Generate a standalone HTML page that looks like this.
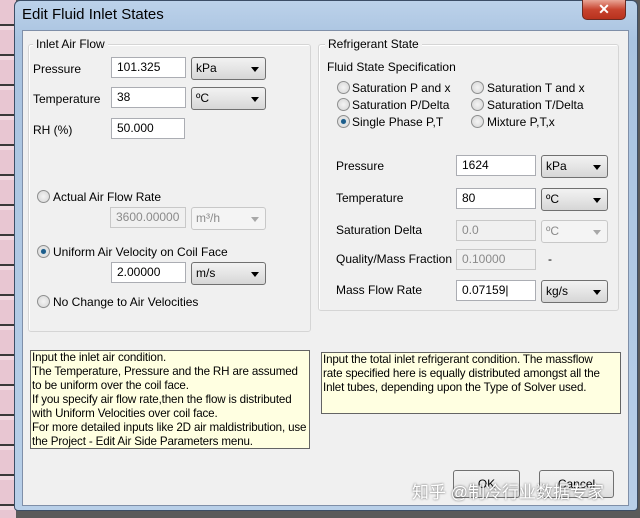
<!DOCTYPE html>
<html><head><meta charset="utf-8"><style>
*{box-sizing:border-box;margin:0;padding:0}
body{width:640px;height:518px;overflow:hidden;position:relative;background:#5a5a5a;font-family:"Liberation Sans",Tahoma,sans-serif;font-size:12px;color:#000}
.a{position:absolute}
.strip{left:0;top:0;width:16px;height:518px;background:repeating-linear-gradient(#e8c6d2 0 24px,#3a3a3a 24px 26px,#f0d8e0 26px 30px);}
.win{left:14px;top:0;width:624px;height:511px;background:linear-gradient(#bcd2ea,#a9c3e0 40px,#b8cfe8);border:1px solid #3c4e66;border-radius:6px 6px 4px 4px}
.client{left:22px;top:30px;width:607px;height:476px;background:#f0f0f0;border:1px solid #7f8fa8}
.title{left:22px;top:6px;font-size:15px;color:#000}
.close{left:582px;top:0;width:44px;height:20px;background:linear-gradient(#e9a596,#c8442f 50%,#b8321e);border:1px solid #6b2a22;border-top:none;border-radius:0 0 5px 5px;color:#fff;font-weight:bold;text-align:center;font-size:14px;line-height:18px}
.grp{border:1px solid #d5d5d5;border-radius:3px;box-shadow:1px 1px 0 #fff inset}
.gl{background:#f0f0f0;padding:0 3px}
.tb{height:21px;background:#fff;border:1px solid #abadb3;padding:2px 5px;line-height:15px}
.tb.dis{background:#f0f0f0;color:#8a8a8a;border-color:#c8c8c8}
.cb{height:23px;border:1px solid #707070;border-radius:3px;background:linear-gradient(#f2f2f2,#e5e5e5 50%,#d6d6d6);padding:3px 4px;line-height:15px}
.cb:after{content:"";position:absolute;right:6px;top:9px;border-left:4px solid transparent;border-right:4px solid transparent;border-top:5px solid #000}
.cb.dis{border-color:#c8c8c8;background:#f4f4f4;color:#8a8a8a}
.cb.dis:after{border-top-color:#a8a8a8}
.r{width:13px;height:13px;border-radius:50%;border:1px solid #8e8f8f;background:radial-gradient(#f4f4f4,#d4d4d4)}
.r.on:after{content:"";position:absolute;left:3px;top:3px;width:5px;height:5px;border-radius:50%;background:#1c5d8c;box-shadow:0 0 1px #7ab}
.yb{background:#ffffe1;border:1px solid #646464;padding:0 1px;line-height:14px;font-size:11.6px;letter-spacing:-0.15px}
.btn{border:1px solid #707070;border-radius:3px;background:linear-gradient(#f2f2f2,#ebebeb 50%,#dddddd);text-align:center;line-height:26px}
</style></head><body>
<div class="a strip"></div>
<div class="a win"></div>
<div class="a title">Edit Fluid Inlet States</div>
<div class="a close">✕</div>
<div class="a client"></div>

<div class="a grp" style="left:28px;top:44px;width:283px;height:288px"></div>
<div class="a gl" style="left:33px;top:37px">Inlet Air Flow</div>
<div class="a" style="left:33px;top:62px">Pressure</div>
<div class="a tb" style="left:111px;top:57px;width:75px">101.325</div>
<div class="a cb" style="left:191px;top:57px;width:75px">kPa</div>
<div class="a" style="left:33px;top:92px">Temperature</div>
<div class="a tb" style="left:111px;top:87px;width:75px">38</div>
<div class="a cb" style="left:191px;top:87px;width:75px">ºC</div>
<div class="a" style="left:33px;top:123px">RH (%)</div>
<div class="a tb" style="left:111px;top:118px;width:74px">50.000</div>
<div class="a r" style="left:37px;top:190px"></div>
<div class="a" style="left:53px;top:190px">Actual Air Flow Rate</div>
<div class="a tb dis" style="left:110px;top:207px;width:76px">3600.00000</div>
<div class="a cb dis" style="left:191px;top:207px;width:75px">m³/h</div>
<div class="a r on" style="left:37px;top:245px"></div>
<div class="a" style="left:53px;top:245px">Uniform Air Velocity on Coil Face</div>
<div class="a tb" style="left:111px;top:262px;width:75px">2.00000</div>
<div class="a cb" style="left:191px;top:262px;width:75px">m/s</div>
<div class="a r" style="left:37px;top:295px"></div>
<div class="a" style="left:53px;top:295px">No Change to Air Velocities</div>

<div class="a grp" style="left:318px;top:44px;width:301px;height:267px"></div>
<div class="a gl" style="left:325px;top:37px">Refrigerant State</div>
<div class="a" style="left:327px;top:60px">Fluid State Specification</div>
<div class="a r" style="left:337px;top:81px"></div><div class="a" style="left:352px;top:81px">Saturation P and x</div>
<div class="a r" style="left:471px;top:81px"></div><div class="a" style="left:487px;top:81px">Saturation T and x</div>
<div class="a r" style="left:337px;top:98px"></div><div class="a" style="left:352px;top:98px">Saturation P/Delta</div>
<div class="a r" style="left:471px;top:98px"></div><div class="a" style="left:487px;top:98px">Saturation T/Delta</div>
<div class="a r on" style="left:337px;top:115px"></div><div class="a" style="left:352px;top:115px">Single Phase P,T</div>
<div class="a r" style="left:471px;top:115px"></div><div class="a" style="left:487px;top:115px">Mixture P,T,x</div>
<div class="a" style="left:336px;top:159px">Pressure</div>
<div class="a tb" style="left:456px;top:155px;width:80px">1624</div>
<div class="a cb" style="left:541px;top:155px;width:67px">kPa</div>
<div class="a" style="left:336px;top:191px">Temperature</div>
<div class="a tb" style="left:456px;top:188px;width:80px">80</div>
<div class="a cb" style="left:541px;top:188px;width:67px">ºC</div>
<div class="a" style="left:336px;top:223px">Saturation Delta</div>
<div class="a tb dis" style="left:456px;top:220px;width:80px">0.0</div>
<div class="a cb dis" style="left:541px;top:220px;width:67px">ºC</div>
<div class="a" style="left:336px;top:252px">Quality/Mass Fraction</div>
<div class="a tb dis" style="left:456px;top:249px;width:80px">0.10000</div>
<div class="a" style="left:548px;top:252px">-</div>
<div class="a" style="left:336px;top:283px">Mass Flow Rate</div>
<div class="a tb" style="left:456px;top:280px;width:80px">0.07159|</div>
<div class="a cb" style="left:541px;top:280px;width:67px">kg/s</div>

<div class="a yb" style="left:30px;top:350px;width:280px;height:99px">Input the inlet air condition.<br>The Temperature, Pressure and the RH are assumed<br>to be uniform over the coil face.<br>If you specify air flow rate,then the flow is distributed<br>with Uniform Velocities over coil face.<br>For more detailed inputs like 2D air maldistribution, use<br>the Project - Edit Air Side Parameters menu.</div>
<div class="a yb" style="left:321px;top:352px;width:300px;height:62px">Input the total inlet refrigerant condition. The massflow<br>rate specified here is equally distributed amongst all the<br>Inlet tubes, depending upon the Type of Solver used.</div>

<div class="a btn" style="left:453px;top:470px;width:67px;height:28px">OK</div>
<div class="a btn" style="left:539px;top:470px;width:75px;height:28px">Cancel</div>
<div class="a" style="left:412px;top:478px;font-size:17px;color:#fff;text-shadow:0 0 2px #555;font-family:'Liberation Sans','Noto Sans CJK SC',sans-serif">知乎 @制冷行业数据专家</div>
</body></html>
